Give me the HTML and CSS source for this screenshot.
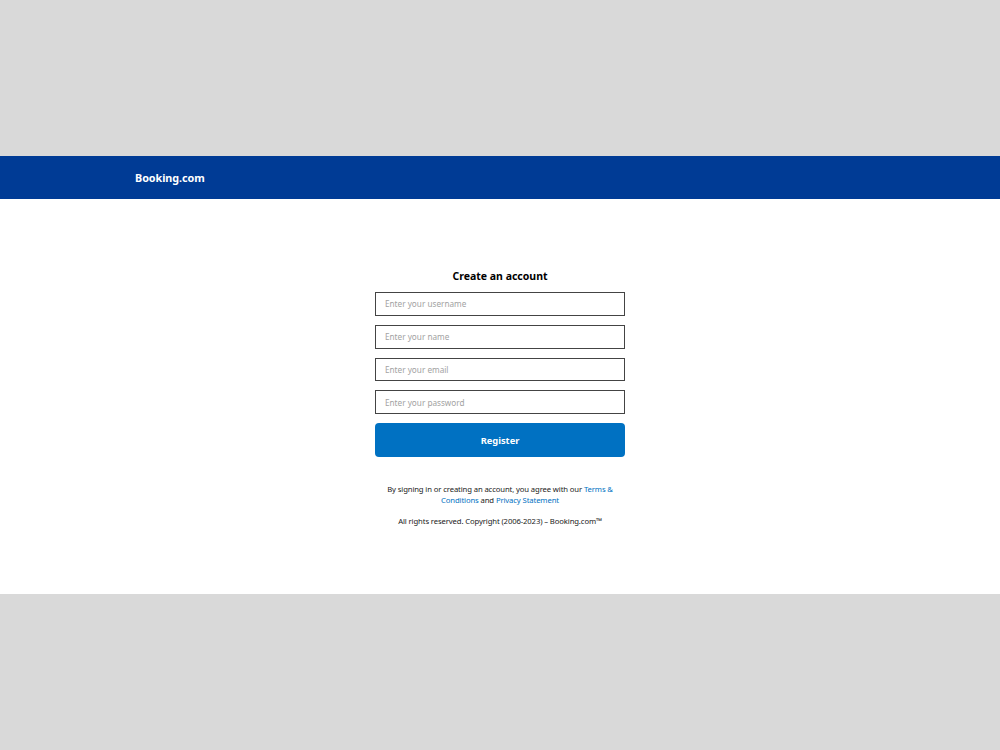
FILE: index.html
```html
<!DOCTYPE html>
<html lang="en">
<head>
    <meta charset="UTF-8">
    <meta name="viewport" content="width=device-width, initial-scale=1.0">
    <title>Create an account</title>
    <link rel="stylesheet" href="styles.css">
</head>
<body>
    <div class="page">
        <header class="topbar">
            <span class="logo">Booking.com</span>
        </header>
        <main class="content">
            <form class="register-form">
                <h1 class="title">Create an account</h1>
                <input class="field" type="text" placeholder="Enter your username">
                <input class="field" type="text" placeholder="Enter your name">
                <input class="field" type="email" placeholder="Enter your email">
                <input class="field" type="password" placeholder="Enter your password">
                <button class="submit" type="button">Register</button>
                <p class="terms">By signing in or creating an account, you agree with our <a href="#">Terms &amp; Conditions</a> and <a href="#">Privacy Statement</a></p>
                <p class="copyright">All rights reserved. Copyright (2006-2023) – Booking.com™</p>
            </form>
        </main>
    </div>
</body>
</html>
```

FILE: styles.css
```css
body {
    font-family: "Noto Sans", "Open Sans", sans-serif;
    display: flex;
    align-items: center;
    height: 100vh;
    margin: 0;
    background-color: #d9d9d9;
}

.page {
    width: 100%;
    background-color: #fff;
}

.topbar {
    display: flex;
    align-items: center;
    height: 43px;
    padding-left: 135px;
    background-color: #003b95;
}

.logo {
    color: #fff;
    font-size: 10.8px;
    font-weight: 700;
    letter-spacing: -0.05px;
}

.content {
    display: flex;
    justify-content: center;
    height: 395px;
}

.register-form {
    display: flex;
    flex-direction: column;
    width: 250px;
    padding-top: 69px;
}

.title {
    margin: 0 0 8px;
    font-size: 10.5px;
    line-height: 16px;
    font-weight: 700;
    text-align: center;
    color: #000;
}

.field {
    box-sizing: border-box;
    height: 23.75px;
    margin-bottom: 9px;
    padding: 0 9px;
    border: 1px solid #444;
    font-family: inherit;
    font-size: 8.2px;
    outline: none;
}

.field::placeholder {
    color: #a2a2a2;
    opacity: 1;
}

.submit {
    height: 34px;
    margin-bottom: 27px;
    border: none;
    border-radius: 4px;
    background-color: #0071c2;
    color: #fff;
    font-family: inherit;
    font-size: 9.3px;
    font-weight: 700;
}

.terms,
.copyright {
    margin: 0;
    font-size: 7.7px;
    letter-spacing: -0.12px;
    line-height: 11px;
    text-align: center;
    color: #1a1a1a;
}

.terms {
    margin-bottom: 10px;
}

.terms a {
    color: #0071c2;
    text-decoration: none;
}
```
